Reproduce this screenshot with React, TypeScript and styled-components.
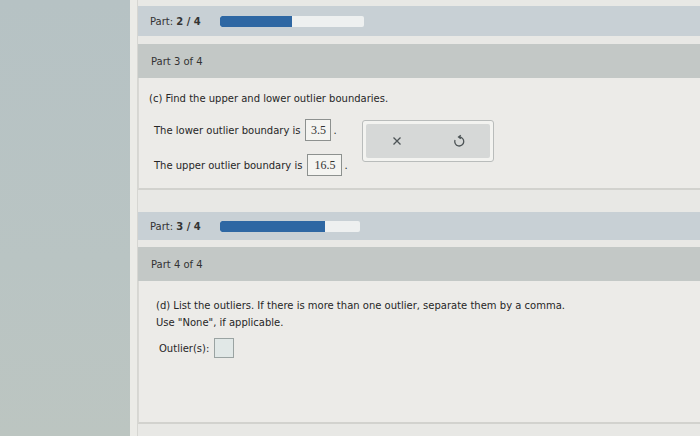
import styled, { createGlobalStyle } from 'styled-components';

const GlobalStyle = createGlobalStyle`
  html, body {
    margin: 0;
    padding: 0;
    width: 700px;
    height: 436px;
    overflow: hidden;
    background: #e6e6e3;
    font-family: 'DejaVu Sans', Verdana, sans-serif;
    color: #262626;
  }
`;

const Page = styled.div`
  display: flex;
  width: 700px;
  height: 436px;
`;

const Sidebar = styled.div`
  width: 130px;
  flex-shrink: 0;
  background: linear-gradient(180deg, #b6c2c4 0%, #b9c4c3 60%, #bcc5c1 100%);
`;

const Divider = styled.div`
  width: 7px;
  flex-shrink: 0;
  background: #ebebe7;
  border-right: 1px solid #d6d6d2;
`;

const Main = styled.div`
  flex: 1;
  display: flex;
  flex-direction: column;
  padding-top: 6px;
  background: #e8e8e5;
`;

const ProgressRow = styled.div<{ h: number }>`
  display: flex;
  align-items: center;
  height: ${({ h }) => h}px;
  padding-left: 12px;
  background: #c8d0d5;
  font-size: 10px;
  color: #333;
`;

const PartLabel = styled.span`
  width: 70px;
  b {
    font-weight: bold;
  }
`;

const Track = styled.div<{ w: number }>`
  width: ${({ w }) => w}px;
  height: 11px;
  background: #eef0f0;
  border-radius: 2px;
  overflow: hidden;
`;

const Fill = styled.div`
  height: 100%;
  background: #2e67a3;
  border-radius: 2px 0 0 2px;
`;

const SectionHeader = styled.div<{ top: number }>`
  margin-top: ${({ top }) => top}px;
  height: 34px;
  display: flex;
  align-items: center;
  padding-left: 13px;
  background: #c3c8c6;
  font-size: 10px;
  color: #333;
`;

const Panel = styled.div<{ h: number; pad: number; top: number }>`
  height: ${({ h }) => h}px;
  padding: ${({ top }) => top}px 0 0 ${({ pad }) => pad}px;
  box-sizing: border-box;
  background: #ecebe8;
  border-left: 1px solid #d8d8d4;
  border-bottom: 2px solid #d2d2ce;
  font-size: 10px;
  color: #262626;
`;

const Prompt = styled.div`
  margin-bottom: 15px;
`;

const Line = styled.div<{ gap?: number }>`
  margin-bottom: ${({ gap }) => gap ?? 0}px;
`;

const AnswerArea = styled.div`
  display: flex;
  align-items: flex-start;
  gap: 14px;
`;

const Answers = styled.div`
  display: flex;
  flex-direction: column;
  gap: 13px;
  padding-left: 5px;
`;

const AnswerLine = styled.div`
  display: flex;
  align-items: center;
  gap: 5px;
`;

const AnswerBox = styled.span<{ w: number }>`
  display: inline-flex;
  align-items: center;
  justify-content: center;
  width: ${({ w }) => w}px;
  height: 20px;
  border: 1px solid #8d918f;
  background: #f4f4f1;
  font-family: 'Liberation Serif', 'Times New Roman', serif;
  font-size: 12px;
  color: #333;
`;

const Period = styled.span`
  margin-left: -3px;
`;

const ToolFrame = styled.div`
  margin-top: 1px;
  width: 132px;
  height: 42px;
  padding: 3px;
  box-sizing: border-box;
  border: 1px solid #b9bcbb;
  border-radius: 3px;
  background: #f3f3f0;
`;

const ToolInner = styled.div`
  height: 100%;
  display: flex;
  align-items: center;
  justify-content: space-around;
  background: #d6d8d7;
  border-radius: 2px;
`;

const IconButton = styled.span`
  display: inline-flex;
  width: 14px;
  height: 14px;
  color: #4d5456;
`;

const EmptyBox = styled.span`
  display: inline-block;
  width: 18px;
  height: 18px;
  border: 1px solid #9aa3a2;
  background: #e1e8e7;
  margin-left: 5px;
`;

const OutlierRow = styled.div`
  display: flex;
  align-items: center;
  padding-left: 3px;
  margin-top: 10px;
`;

const Spacer = styled.div<{ h: number }>`
  height: ${({ h }) => h}px;
`;

const Cross = () => (
  <svg viewBox="0 0 14 14" width="14" height="14" fill="none" stroke="currentColor" strokeWidth="1.3">
    <path d="M3.5 3.5 L10.5 10.5 M10.5 3.5 L3.5 10.5" />
  </svg>
);

const Undo = () => (
  <svg viewBox="0 0 14 14" width="14" height="14" fill="none" stroke="currentColor" strokeWidth="1.3">
    <path d="M7 3 A4.5 4.5 0 1 1 3 6" />
    <path d="M8.8 1.4 L6.6 3 L8.8 4.6" />
  </svg>
);

export default function App() {
  return (
    <Page>
      <GlobalStyle />
      <Sidebar />
      <Divider />
      <Main>
        <ProgressRow h={30}>
          <PartLabel>
            Part: <b>2 / 4</b>
          </PartLabel>
          <Track w={144}>
            <Fill style={{ width: '50%' }} />
          </Track>
        </ProgressRow>

        <SectionHeader top={8}>Part 3 of 4</SectionHeader>
        <Panel h={112} pad={10} top={15}>
          <Prompt>(c) Find the upper and lower outlier boundaries.</Prompt>
          <AnswerArea>
            <Answers>
              <AnswerLine>
                The lower outlier boundary is <AnswerBox w={24}>3.5</AnswerBox>
                <Period>.</Period>
              </AnswerLine>
              <AnswerLine>
                The upper outlier boundary is <AnswerBox w={33}>16.5</AnswerBox>
                <Period>.</Period>
              </AnswerLine>
            </Answers>
            <ToolFrame>
              <ToolInner>
                <IconButton>
                  <Cross />
                </IconButton>
                <IconButton>
                  <Undo />
                </IconButton>
              </ToolInner>
            </ToolFrame>
          </AnswerArea>
        </Panel>

        <Spacer h={22} />
        <ProgressRow h={28}>
          <PartLabel>
            Part: <b>3 / 4</b>
          </PartLabel>
          <Track w={140}>
            <Fill style={{ width: '75%' }} />
          </Track>
        </ProgressRow>

        <SectionHeader top={7}>Part 4 of 4</SectionHeader>
        <Panel h={143} pad={17} top={19}>
          <Line gap={6}>(d) List the outliers. If there is more than one outlier, separate them by a comma.</Line>
          <Line>Use "None", if applicable.</Line>
          <OutlierRow>
            Outlier(s):
            <EmptyBox />
          </OutlierRow>
        </Panel>
      </Main>
    </Page>
  );
}
